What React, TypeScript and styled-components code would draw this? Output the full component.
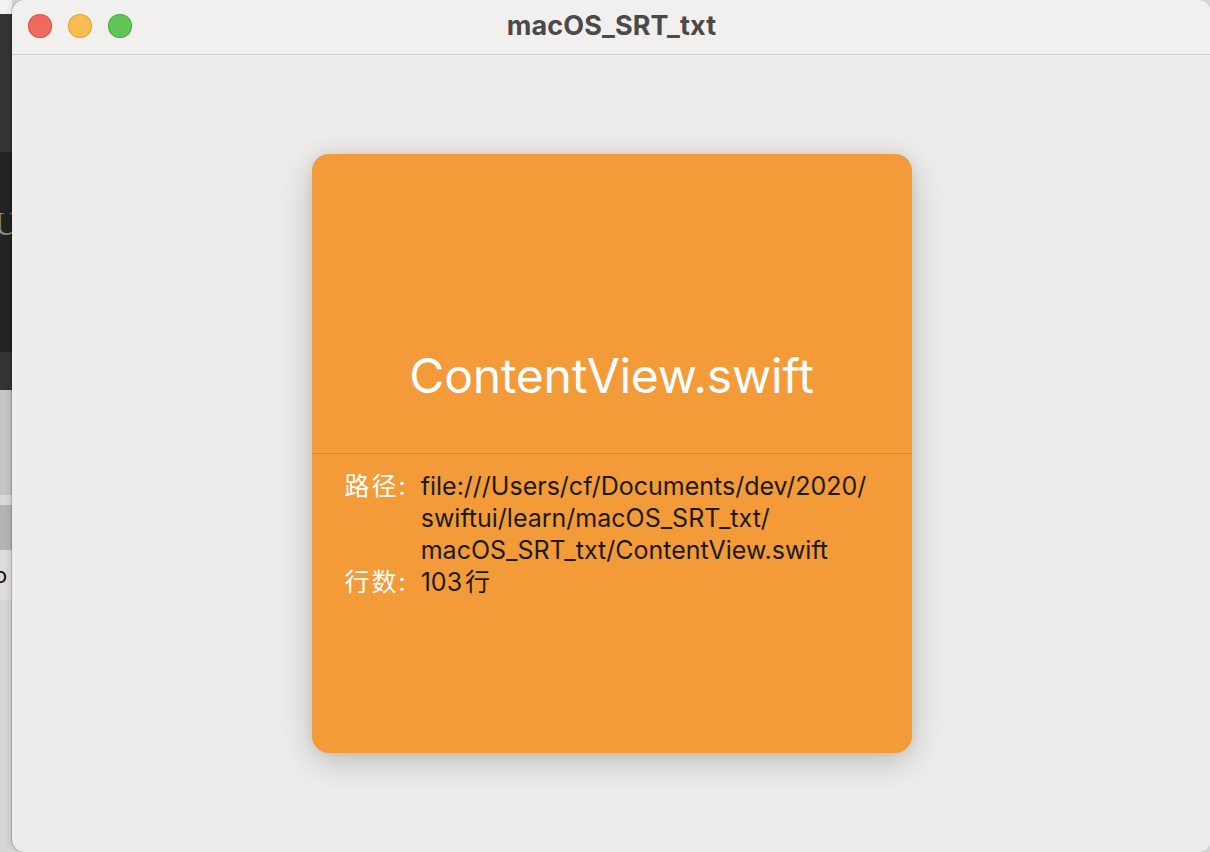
import React from "react";
import styled, { createGlobalStyle } from "styled-components";

const Global = createGlobalStyle`
  html, body { margin: 0; padding: 0; width: 1210px; height: 852px; overflow: hidden; background: #d6d6d6; }
  body { font-family: Inter, "Noto Sans CJK SC", sans-serif; -webkit-font-smoothing: antialiased; }
`;

const Desktop = styled.div`
  display: flex;
  width: 1210px;
  height: 852px;
  overflow: hidden;
`;

const BackApp = styled.div`
  width: 12px;
  flex: none;
  display: flex;
  flex-direction: column;
  overflow: hidden;
`;

const BackBlock = styled.div<{ $h: number; $bg: string; $fg?: string }>`
  height: ${(p) => p.$h}px;
  flex: none;
  background: ${(p) => p.$bg};
  color: ${(p) => p.$fg || "transparent"};
  display: flex;
  align-items: center;
  overflow: hidden;
  white-space: nowrap;
`;

const BackGlyph = styled.span<{ $size: number; $serif?: boolean; $shift?: number }>`
  font-size: ${(p) => p.$size}px;
  font-family: ${(p) => (p.$serif ? '"Liberation Serif", serif' : 'Inter, sans-serif')};
  margin-left: -6px;
  margin-top: ${(p) => p.$shift || 0}px;
`;

const Window = styled.div`
  flex: 1;
  display: flex;
  flex-direction: column;
  border-radius: 13px;
  background: #eeedeb;
  box-shadow: -1px 0 0 rgba(0, 0, 0, 0.18), -3px 0 6px rgba(0, 0, 0, 0.08);
  overflow: hidden;
  margin-right: -1px;
`;

const TitleBar = styled.div`
  height: 54px;
  flex: none;
  display: grid;
  grid-template-columns: 1fr auto 1fr;
  align-items: center;
  background: #f1f0ee;
  border-bottom: 1px solid #d2d0ce;
  padding: 0 16px;
`;

const Lights = styled.div`
  display: flex;
  gap: 16px;
  margin-top: -2px;
`;

const Light = styled.span<{ $c: string; $b: string }>`
  width: 24px;
  height: 24px;
  border-radius: 50%;
  background: ${(p) => p.$c};
  box-shadow: inset 0 0 0 1px ${(p) => p.$b};
`;

const WinTitle = styled.div`
  font-size: 27px;
  font-weight: 700;
  color: #4b4a49;
  letter-spacing: 0.1px;
  transform: translate(0px, -2px);
`;

const Content = styled.div`
  flex: 1;
  display: flex;
  justify-content: center;
  padding-top: 99px;
`;

const Card = styled.div`
  width: 600px;
  height: 599px;
  border-radius: 17px;
  background: #f29b38;
  box-shadow: 0 8px 34px rgba(0, 0, 0, 0.22), 0 0 10px rgba(0, 0, 0, 0.06);
  display: flex;
  flex-direction: column;
  overflow: hidden;
`;

const TopHalf = styled.div`
  height: 299px;
  display: flex;
  align-items: flex-end;
  justify-content: center;
  padding-bottom: 48px;
  box-sizing: border-box;
`;

const FileName = styled.div`
  font-size: 48px;
  color: #ffffff;
  letter-spacing: -0.25px;
  line-height: 58px;
`;

const Divider = styled.div`
  height: 1px;
  background: #d8872f;
  flex: none;
`;

const Info = styled.div`
  display: grid;
  grid-template-columns: auto 1fr;
  column-gap: 13px;
  padding: 16px 32px 0 33px;
  font-size: 25px;
  line-height: 32px;
`;

const Label = styled.div`
  color: #ffffff;
  letter-spacing: 2px;
  font-family: Inter, "Noto Sans CJK SC", sans-serif;
`;

const Value = styled.div`
  color: #1d1a16;
`;

const Line = styled.div`
  white-space: nowrap;
`;

const Unit = styled.span`
  margin-left: 3px;
`;

export default function App() {
  return (
    <>
      <Global />
      <Desktop>
        <BackApp>
          <BackBlock $h={14} $bg="#f2f2f2" />
          <BackBlock $h={138} $bg="#333333" />
          <BackBlock $h={200} $bg="#232323" $fg="#8a8a8a">
            <BackGlyph $size={34} $serif $shift={-56}>U</BackGlyph>
          </BackBlock>
          <BackBlock $h={38} $bg="#333333" />
          <BackBlock $h={105} $bg="#c6c5c3" />
          <BackBlock $h={10} $bg="#d9d9d9" />
          <BackBlock $h={45} $bg="#b4b4b4" />
          <BackBlock $h={50} $bg="#dcdcdc" $fg="#111111">
            <BackGlyph $size={22}>o</BackGlyph>
          </BackBlock>
          <BackBlock $h={252} $bg="#d6d6d6" />
        </BackApp>
        <Window>
          <TitleBar>
            <Lights>
              <Light $c="#ee6a5e" $b="#d65a4f" />
              <Light $c="#f6be4f" $b="#dea43f" />
              <Light $c="#61c454" $b="#4ead41" />
            </Lights>
            <WinTitle>macOS_SRT_txt</WinTitle>
            <div />
          </TitleBar>
          <Content>
            <Card>
              <TopHalf>
                <FileName>ContentView.swift</FileName>
              </TopHalf>
              <Divider />
              <Info>
                <Label>路径:</Label>
                <Value>
                  <Line>file:///Users/cf/Documents/dev/2020/</Line>
                  <Line>swiftui/learn/macOS_SRT_txt/</Line>
                  <Line>macOS_SRT_txt/ContentView.swift</Line>
                </Value>
                <Label>行数:</Label>
                <Value>
                  103<Unit>行</Unit>
                </Value>
              </Info>
            </Card>
          </Content>
        </Window>
      </Desktop>
    </>
  );
}
